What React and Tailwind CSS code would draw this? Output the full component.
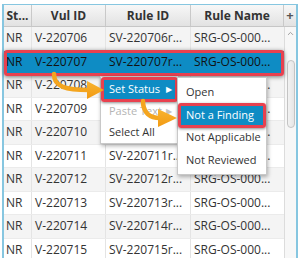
import { ChevronUp } from 'lucide-react';

const rows = [
  '706', '707', '708', '709', '710', '711', '712', '713', '714', '715',
];

const MenuItem = ({ label, active, disabled, arrow }) => (
  <div
    className={`relative flex items-center h-[21px] pl-[6px] pr-[4px] whitespace-nowrap ${
      active ? 'bg-[#0e8cc4] text-white' : disabled ? 'text-[#b4b4b4]' : 'text-[#333]'
    }`}
  >
    <span className="flex-1">{label}</span>
    {arrow && (
      <span className={`text-[8px] ${active ? 'text-white' : 'text-[#c4c4c4]'}`}>▶</span>
    )}
    {active && (
      <div className="absolute -inset-[2px] rounded-[3px] border-[3px] border-[#e8414f] shadow-[0_1px_3px_rgba(0,0,0,0.45)]" />
    )}
  </div>
);

const App = () => {
  return (
    <div className="relative w-[300px] h-[258px] overflow-hidden bg-white font-['Open_Sans',sans-serif] text-[12px] text-[#333]">
      <div className="mt-1 ml-[2px] w-[296px] h-[254px] border-x-2 border-t border-[#86c6e0] flex flex-col">
        {/* header */}
        <div className="grid grid-cols-[28px_74px_85px_93px_12px] h-[22px] shrink-0 bg-linear-to-b from-[#f7f7f7] to-[#e2e2e2] border-b border-[#c6c6c6] font-bold whitespace-nowrap">
          <div className="flex items-center justify-center border-r border-[#c9c9c9]">St...</div>
          <div className="flex items-center justify-center border-r border-[#c9c9c9]">Vul ID</div>
          <div className="flex items-center justify-center border-r border-[#c9c9c9]">Rule ID</div>
          <div className="flex items-center justify-center border-r border-[#c9c9c9]">Rule Name</div>
          <div className="flex items-center justify-center text-[13px] text-[#555]">+</div>
        </div>
        {/* body */}
        <div className="flex flex-1 overflow-hidden">
          <div className="w-[280px] whitespace-nowrap">
            {rows.map((n, i) => {
              const sel = i === 1;
              const bg = sel ? 'bg-[#0e8cc4]' : i % 2 === 0 ? 'bg-[#f4f4f4]' : 'bg-white';
              return (
                <div
                  key={n}
                  className={`grid grid-cols-[28px_74px_85px_93px] h-[23.5px] items-center border-b border-[#ebebeb] ${bg} ${sel ? 'text-[#111]' : ''}`}
                >
                  <div className={`pl-[2px] h-full flex items-center border-r ${sel ? 'border-[#0e8cc4]' : 'border-[#e4e4e4]'}`}>NR</div>
                  <div className={`pl-[3px] h-full flex items-center border-r ${sel ? 'border-[#0e8cc4]' : 'border-[#e4e4e4]'}`}>V-220{n}</div>
                  <div className={`pl-[3px] h-full flex items-center border-r ${sel ? 'border-[#0e8cc4]' : 'border-[#e4e4e4]'}`}>SV-220{n}r...</div>
                  <div className="pl-[3px] h-full flex items-center">SRG-OS-000...</div>
                </div>
              );
            })}
          </div>
          {/* scrollbar */}
          <div className="w-[12px] border-l border-[#dcdcdc] bg-[#f7f7f7] flex flex-col items-center">
            <ChevronUp className="w-[9px] h-[9px] mt-[2px] text-[#9a9a9a]" strokeWidth={2.5} />
            <div className="mt-[22px] w-[8px] h-[68px] rounded-[4px] border border-[#c4c4c4] bg-linear-to-r from-[#f2f2f2] to-[#e6e6e6]" />
          </div>
        </div>
      </div>

      {/* selected row outline */}
      <div className="absolute left-[4px] top-[50px] w-[280px] h-[26px] rounded-[3px] border-[3px] border-[#e8414f] shadow-[0_1px_4px_rgba(0,0,0,0.5)]" />

      {/* context menu */}
      <div className="absolute left-[100px] top-[76px] w-[78px] h-[68px] bg-white border border-[#c8c8c8] shadow-[1px_2px_4px_rgba(0,0,0,0.3)] pt-[2px] pl-[2px] pr-[1px] text-[11px] flex flex-col gap-[1px]">
        <MenuItem label="Set Status" active arrow />
        <MenuItem label="Paste Text" disabled arrow />
        <MenuItem label="Select All" />
      </div>

      {/* submenu */}
      <div className="absolute left-[177px] top-[77px] w-[90px] h-[98px] bg-white border border-[#c8c8c8] shadow-[1px_2px_4px_rgba(0,0,0,0.3)] pt-[4px] px-[2px] text-[11px] flex flex-col gap-[1.5px]">
        <MenuItem label="Open" />
        <MenuItem label="Not a Finding" active />
        <MenuItem label="Not Applicable" />
        <MenuItem label="Not Reviewed" />
      </div>

      {/* arrows */}
      <svg className="absolute left-0 top-0 pointer-events-none" width="300" height="258">
        <defs>
          <linearGradient id="org" x1="0" y1="0" x2="0" y2="1">
            <stop offset="0" stopColor="#f8b431" />
            <stop offset="1" stopColor="#f29a12" />
          </linearGradient>
        </defs>
        <path d="M54 74 C 54 87, 66 90, 89 90" fill="none" stroke="#f4a51f" strokeWidth="4.5" strokeLinecap="round" />
        <polygon points="87,81 104,90 87,99" fill="url(#org)" />
        <path d="M143 101 C 143 113, 150 118, 160 118" fill="none" stroke="#f4a51f" strokeWidth="4.5" strokeLinecap="round" />
        <polygon points="158,109 177,118 158,127" fill="url(#org)" />
      </svg>
    </div>
  );
};

export default App;
